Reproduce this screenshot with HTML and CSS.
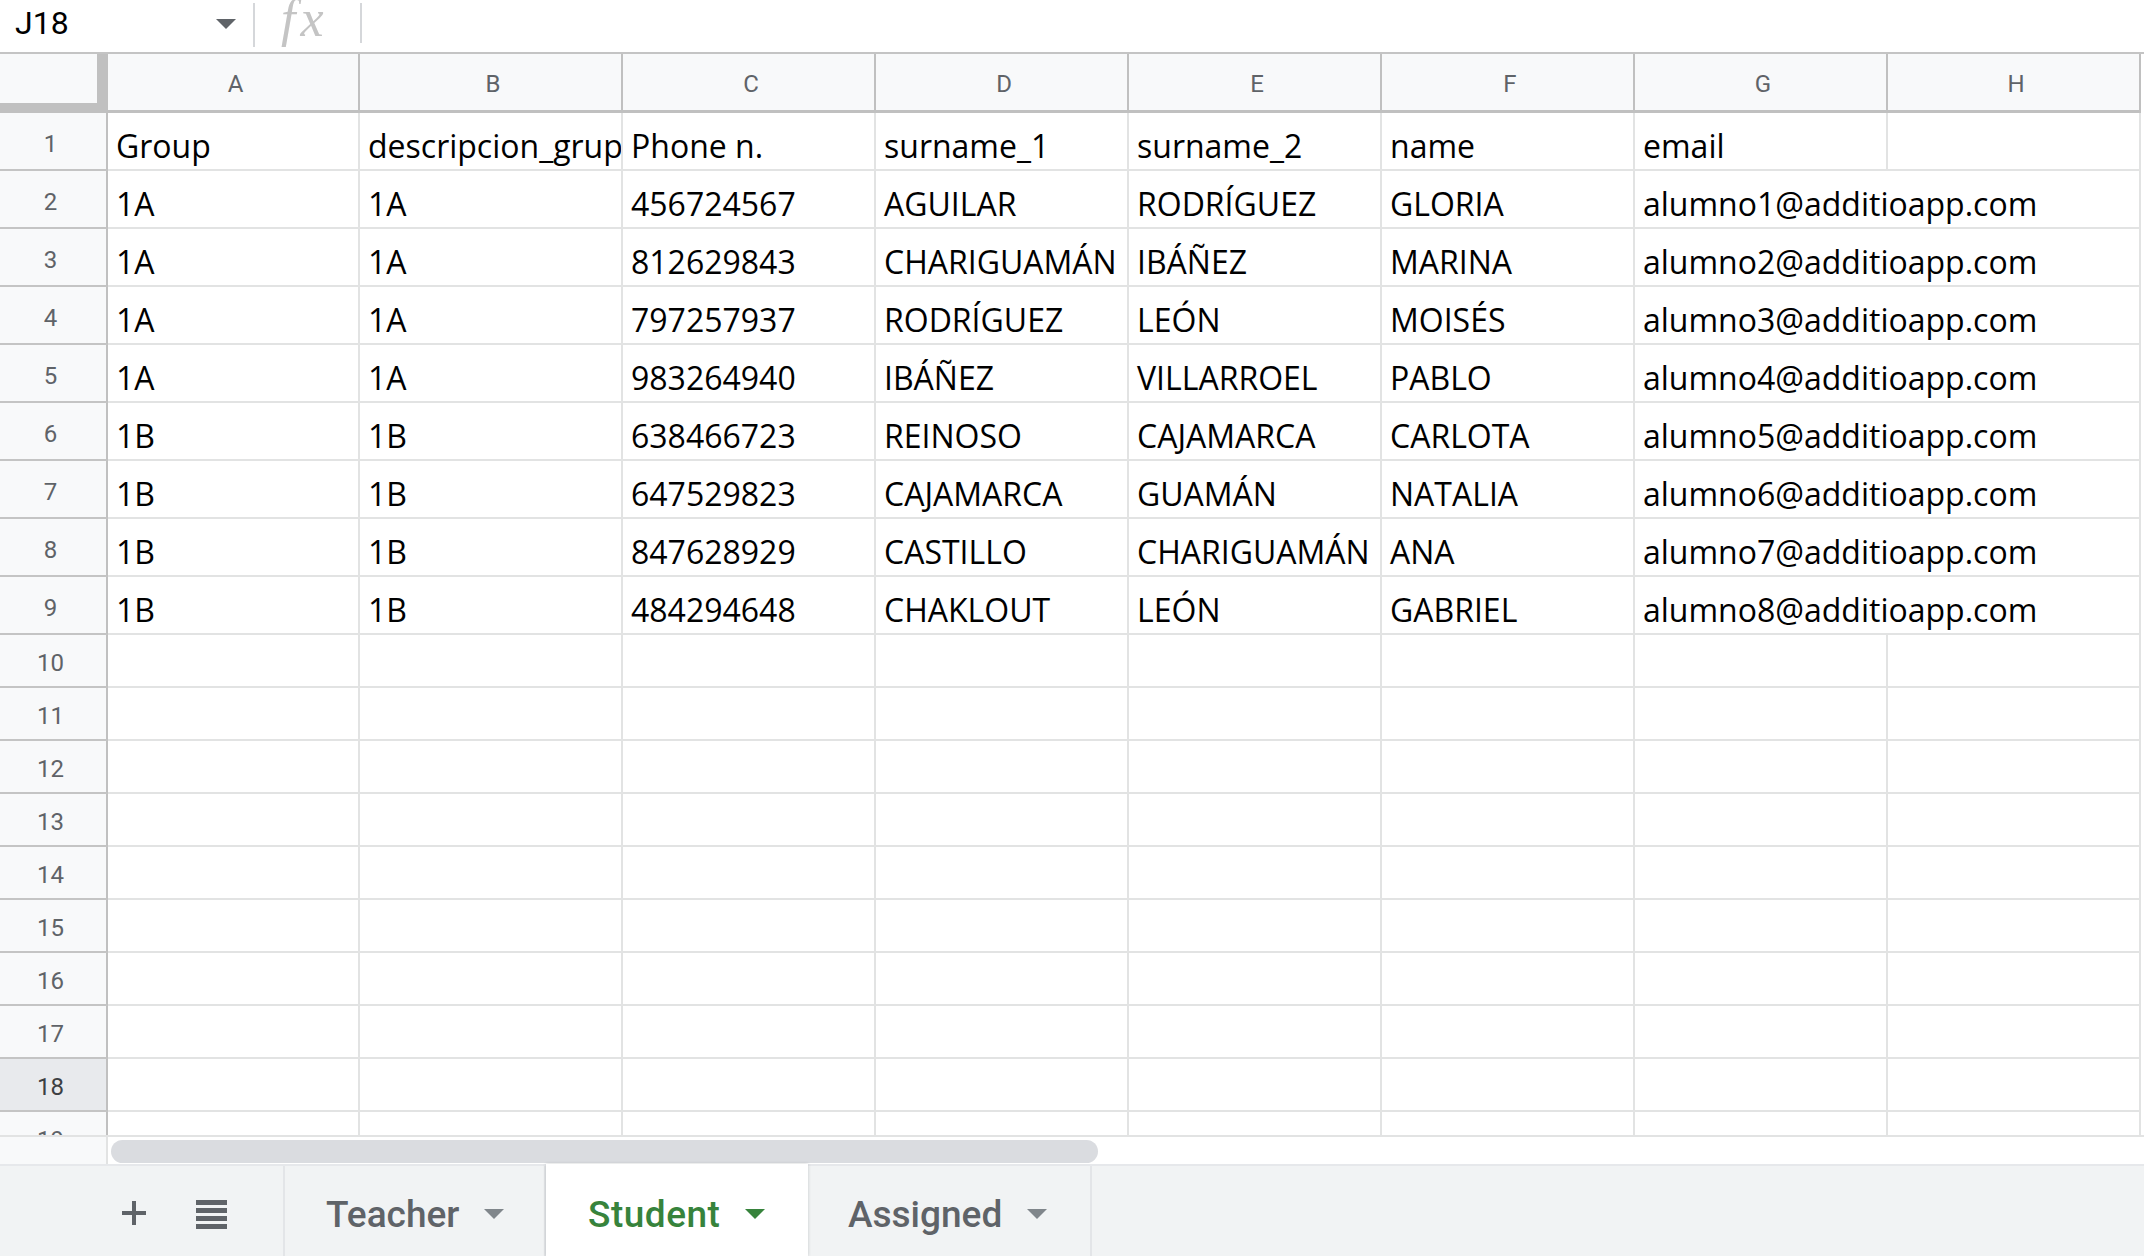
FILE: index.html
```html
<!DOCTYPE html>
<html lang="es">
<head>
<meta charset="utf-8">
<title>Student - Sheet</title>
<link rel="stylesheet" href="styles.css">
</head>
<body>
<div class="topbar">
  <div class="namebox"><span class="namebox-text">J18</span><span class="caret"></span></div>
  <div class="sep"></div>
  <div class="fx">fx</div>
  <div class="sep short"></div>
  <div class="formula"></div>
</div>

<div class="sheet">
  <div class="row hdr">
    <div class="corner"></div>
    <div class="ch">A</div><div class="ch">B</div><div class="ch">C</div><div class="ch">D</div>
    <div class="ch">E</div><div class="ch">F</div><div class="ch">G</div><div class="ch">H</div>
    <div class="rest"></div>
  </div>

  <div class="row">
    <div class="rh">1</div>
    <div class="c">Group</div><div class="c">descripcion_grupo</div><div class="c">Phone n.</div>
    <div class="c">surname_1</div><div class="c">surname_2</div><div class="c">name</div>
    <div class="c">email</div><div class="c"></div><div class="rest"></div>
  </div>
  <div class="row">
    <div class="rh">2</div>
    <div class="c">1A</div><div class="c">1A</div><div class="c">456724567</div>
    <div class="c">AGUILAR</div><div class="c">RODRÍGUEZ</div><div class="c">GLORIA</div>
    <div class="c span2">alumno1@additioapp.com</div><div class="rest"></div>
  </div>
  <div class="row">
    <div class="rh">3</div>
    <div class="c">1A</div><div class="c">1A</div><div class="c">812629843</div>
    <div class="c">CHARIGUAMÁN</div><div class="c">IBÁÑEZ</div><div class="c">MARINA</div>
    <div class="c span2">alumno2@additioapp.com</div><div class="rest"></div>
  </div>
  <div class="row">
    <div class="rh">4</div>
    <div class="c">1A</div><div class="c">1A</div><div class="c">797257937</div>
    <div class="c">RODRÍGUEZ</div><div class="c">LEÓN</div><div class="c">MOISÉS</div>
    <div class="c span2">alumno3@additioapp.com</div><div class="rest"></div>
  </div>
  <div class="row">
    <div class="rh">5</div>
    <div class="c">1A</div><div class="c">1A</div><div class="c">983264940</div>
    <div class="c">IBÁÑEZ</div><div class="c">VILLARROEL</div><div class="c">PABLO</div>
    <div class="c span2">alumno4@additioapp.com</div><div class="rest"></div>
  </div>
  <div class="row">
    <div class="rh">6</div>
    <div class="c">1B</div><div class="c">1B</div><div class="c">638466723</div>
    <div class="c">REINOSO</div><div class="c">CAJAMARCA</div><div class="c">CARLOTA</div>
    <div class="c span2">alumno5@additioapp.com</div><div class="rest"></div>
  </div>
  <div class="row">
    <div class="rh">7</div>
    <div class="c">1B</div><div class="c">1B</div><div class="c">647529823</div>
    <div class="c">CAJAMARCA</div><div class="c">GUAMÁN</div><div class="c">NATALIA</div>
    <div class="c span2">alumno6@additioapp.com</div><div class="rest"></div>
  </div>
  <div class="row">
    <div class="rh">8</div>
    <div class="c">1B</div><div class="c">1B</div><div class="c">847628929</div>
    <div class="c">CASTILLO</div><div class="c">CHARIGUAMÁN</div><div class="c">ANA</div>
    <div class="c span2">alumno7@additioapp.com</div><div class="rest"></div>
  </div>
  <div class="row">
    <div class="rh">9</div>
    <div class="c">1B</div><div class="c">1B</div><div class="c">484294648</div>
    <div class="c">CHAKLOUT</div><div class="c">LEÓN</div><div class="c">GABRIEL</div>
    <div class="c span2">alumno8@additioapp.com</div><div class="rest"></div>
  </div>

  <div class="row short"><div class="rh">10</div><div class="c"></div><div class="c"></div><div class="c"></div><div class="c"></div><div class="c"></div><div class="c"></div><div class="c"></div><div class="c"></div><div class="rest"></div></div>
  <div class="row short"><div class="rh">11</div><div class="c"></div><div class="c"></div><div class="c"></div><div class="c"></div><div class="c"></div><div class="c"></div><div class="c"></div><div class="c"></div><div class="rest"></div></div>
  <div class="row short"><div class="rh">12</div><div class="c"></div><div class="c"></div><div class="c"></div><div class="c"></div><div class="c"></div><div class="c"></div><div class="c"></div><div class="c"></div><div class="rest"></div></div>
  <div class="row short"><div class="rh">13</div><div class="c"></div><div class="c"></div><div class="c"></div><div class="c"></div><div class="c"></div><div class="c"></div><div class="c"></div><div class="c"></div><div class="rest"></div></div>
  <div class="row short"><div class="rh">14</div><div class="c"></div><div class="c"></div><div class="c"></div><div class="c"></div><div class="c"></div><div class="c"></div><div class="c"></div><div class="c"></div><div class="rest"></div></div>
  <div class="row short"><div class="rh">15</div><div class="c"></div><div class="c"></div><div class="c"></div><div class="c"></div><div class="c"></div><div class="c"></div><div class="c"></div><div class="c"></div><div class="rest"></div></div>
  <div class="row short"><div class="rh">16</div><div class="c"></div><div class="c"></div><div class="c"></div><div class="c"></div><div class="c"></div><div class="c"></div><div class="c"></div><div class="c"></div><div class="rest"></div></div>
  <div class="row short"><div class="rh">17</div><div class="c"></div><div class="c"></div><div class="c"></div><div class="c"></div><div class="c"></div><div class="c"></div><div class="c"></div><div class="c"></div><div class="rest"></div></div>
  <div class="row short"><div class="rh selected">18</div><div class="c"></div><div class="c"></div><div class="c"></div><div class="c"></div><div class="c"></div><div class="c"></div><div class="c"></div><div class="c"></div><div class="rest"></div></div>
  <div class="row short"><div class="rh">19</div><div class="c"></div><div class="c"></div><div class="c"></div><div class="c"></div><div class="c"></div><div class="c"></div><div class="c"></div><div class="c"></div><div class="rest"></div></div>
</div>

<div class="hscroll">
  <div class="hscroll-left"></div>
  <div class="thumb"></div>
</div>

<div class="tabbar">
  <div class="tabtools">
    <svg class="icon-plus" width="26" height="26" viewBox="0 0 26 26"><path d="M13 1v24M1 13h24" stroke="#5f6368" stroke-width="4" fill="none"/></svg>
    <svg class="icon-list" width="31" height="29" viewBox="0 0 31 29"><rect x="0" y="0" width="31" height="5" fill="#5f6368"/><rect x="0" y="8" width="31" height="5" fill="#5f6368"/><rect x="0" y="16" width="31" height="5" fill="#5f6368"/><rect x="0" y="24" width="31" height="5" fill="#5f6368"/></svg>
  </div>
  <div class="tab tab-teacher"><span class="tab-label">Teacher</span><span class="tri"></span></div>
  <div class="tab tab-student active"><span class="tab-label">Student</span><span class="tri"></span></div>
  <div class="tab tab-assigned"><span class="tab-label">Assigned</span><span class="tri"></span></div>
</div>
</body>
</html>
```

FILE: styles.css
```css
html, body {
  margin: 0;
  padding: 0;
}
body {
  width: 2144px;
  height: 1256px;
  overflow: hidden;
  background: #ffffff;
  font-family: Roboto, "Liberation Sans", sans-serif;
}

/* ---------- top bar ---------- */
.topbar {
  height: 52px;
  display: flex;
  align-items: flex-start;
  background: #ffffff;
}
.namebox {
  box-sizing: border-box;
  width: 253px;
  height: 52px;
  padding: 0 17px 0 15px;
  display: flex;
  align-items: center;
  justify-content: space-between;
}
.namebox-text {
  font-family: Roboto, sans-serif;
  font-size: 32px;
  color: #000000;
  line-height: 1;
  margin-top: -6px;
}
.caret {
  width: 0;
  height: 0;
  border-left: 10px solid transparent;
  border-right: 10px solid transparent;
  border-top: 10px solid #5f6368;
  margin-top: -4px;
}
.sep {
  width: 2px;
  height: 44px;
  margin-top: 3px;
  background: #d5d7da;
}
.sep.short {
  height: 40px;
}
.fx {
  width: 105px;
  box-sizing: border-box;
  padding-left: 26px;
  margin-top: -1px;
  font-family: "Liberation Serif", serif;
  font-style: italic;
  font-size: 52px;
  line-height: 40px;
  height: 40px;
  letter-spacing: 5px;
  color: #c4c4c4;
}
.formula {
  flex: 1;
}

/* ---------- grid ---------- */
.sheet {
  box-sizing: border-box;
  height: 1083px;
  border-top: 2px solid #c4c4c4;
  overflow: hidden;
}
.row {
  display: grid;
  grid-template-columns: 108px 252px 263px repeat(6, 253px) 1fr;
  height: 58px;
}
.row.short {
  height: 53px;
}
.row.hdr {
  height: 59px;
}
.corner {
  box-sizing: border-box;
  background: #f8f9fa;
  border-right: 11px solid #c0c0c0;
  border-bottom: 10px solid #c0c0c0;
}
.ch {
  box-sizing: border-box;
  background: #f8f9fa;
  border-right: 2px solid #c0c0c0;
  border-bottom: 3px solid #c0c0c0;
  display: flex;
  align-items: center;
  justify-content: center;
  padding: 4px 0 0 5px;
  font-family: Roboto, sans-serif;
  font-size: 24px;
  color: #5f6368;
}
.rh {
  box-sizing: border-box;
  background: #f8f9fa;
  border-right: 2px solid #c0c0c0;
  border-bottom: 2px solid #c4c4c4;
  display: flex;
  align-items: center;
  justify-content: center;
  padding: 5px 5px 0 0;
  font-family: Roboto, sans-serif;
  font-size: 24px;
  color: #5f6368;
}
.rh.selected {
  background: #e8eaed;
  color: #3c4043;
}
.c {
  box-sizing: border-box;
  border-right: 2px solid #e2e3e3;
  border-bottom: 2px solid #e2e3e3;
  padding: 9px 0 0 8px;
  display: flex;
  align-items: center;
  overflow: hidden;
  white-space: nowrap;
  font-family: "Open Sans", "Noto Sans", sans-serif;
  font-size: 32px;
  color: #000000;
}
.c.span2 {
  grid-column: span 2;
}
.rest {
  background: #ffffff;
}

/* ---------- horizontal scroll ---------- */
.hscroll {
  box-sizing: border-box;
  height: 29px;
  border-top: 2px solid #e2e3e3;
  display: flex;
  align-items: flex-start;
  background: #ffffff;
}
.hscroll-left {
  box-sizing: border-box;
  width: 108px;
  height: 27px;
  background: #f8f9fa;
  border-right: 2px solid #e2e3e3;
}
.thumb {
  width: 987px;
  height: 23px;
  margin: 3px 0 0 3px;
  border-radius: 12px;
  background: #dadce0;
}

/* ---------- tabs ---------- */
.tabbar {
  box-sizing: border-box;
  height: 92px;
  border-top: 2px solid #e6e8eb;
  background: #f1f3f4;
  display: flex;
  align-items: stretch;
}
.tabtools {
  box-sizing: border-box;
  width: 285px;
  border-right: 2px solid #e3e5e8;
  display: flex;
  align-items: center;
  padding: 4px 0 0 121px;
}
.icon-plus {
  display: block;
  margin-right: 49px;
}
.icon-list {
  display: block;
  margin-top: 3px;
}
.tab {
  box-sizing: border-box;
  display: flex;
  align-items: center;
  padding-left: 41px;
  padding-top: 6px;
  border-right: 2px solid #e3e5e8;
  font-family: Roboto, sans-serif;
  font-weight: 500;
  font-size: 37px;
  color: #5f6368;
}
.tab-teacher {
  width: 261px;
}
.tab-student {
  width: 262px;
  padding-left: 42px;
}
.tab-assigned {
  width: 284px;
  padding-left: 40px;
}
.tab.active {
  background: #ffffff;
  color: #37833c;
  margin-top: -2px;
  padding-top: 8px;
  border-right: none;
  box-shadow: 0 0 3px rgba(60, 64, 67, 0.25);
  position: relative;
}
.tab-label {
  line-height: 1;
}
.tri {
  width: 0;
  height: 0;
  margin-left: 25px;
  border-left: 10px solid transparent;
  border-right: 10px solid transparent;
  border-top: 10px solid #80868b;
}
.tab.active .tri {
  border-top-color: #37833c;
}
.tab-student .tab-label {
  letter-spacing: 0.5px;
}
```
